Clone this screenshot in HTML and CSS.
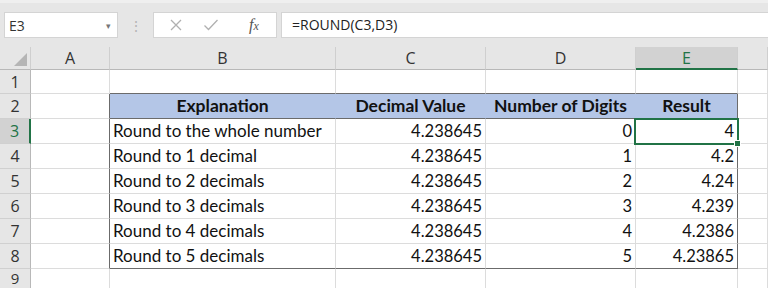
FILE: index.html
```html
<!DOCTYPE html>
<html lang="en">
<head>
    <meta charset="UTF-8">
    <title>ROUND example</title>
    <link rel="stylesheet" href="styles.css">
</head>
<body>

<div class="toolbar">
    <div class="name-box">
        <span>E3</span>
        <span class="caret">&#9662;</span>
    </div>
    <div class="grip">&#8942;</div>
    <div class="fx-box">
        <svg width="14" height="14" viewBox="0 0 14 14" class="ico">
            <path d="M2 2 L12 12 M12 2 L2 12" stroke="#b0b0b0" stroke-width="1.3" fill="none"/>
        </svg>
        <svg width="16" height="14" viewBox="0 0 16 14" class="ico">
            <path d="M1.5 7.5 L5.5 11.5 L14.5 2" stroke="#b0b0b0" stroke-width="1.3" fill="none"/>
        </svg>
        <span class="fx">f<i>x</i></span>
    </div>
    <div class="formula">=ROUND(C3,D3)</div>
</div>

<div class="sheet" id="sheet">
    <!-- cells are built below -->
</div>

<script>
    const rows = [
        ["Round to the whole number", "4.238645", "0", "4"],
        ["Round to 1 decimal", "4.238645", "1", "4.2"],
        ["Round to 2 decimals", "4.238645", "2", "4.24"],
        ["Round to 3 decimals", "4.238645", "3", "4.239"],
        ["Round to 4 decimals", "4.238645", "4", "4.2386"],
        ["Round to 5 decimals", "4.238645", "5", "4.23865"]
    ];
    const heads = ["Explanation", "Decimal Value", "Number of Digits", "Result"];
    const letters = ["A", "B", "C", "D", "E", ""];

    function cell(text, cls) {
        const div = document.createElement("div");
        div.className = "cell " + (cls || "");
        div.textContent = text;
        return div;
    }

    function renderSheet() {
        const sheet = document.getElementById("sheet");

        // column headers
        sheet.appendChild(cell("", "corner"));
        letters.forEach((l) => {
            sheet.appendChild(cell(l, "col-head" + (l === "E" ? " active" : "")));
        });

        for (let r = 1; r <= 9; r++) {
            sheet.appendChild(cell(r, "row-head" + (r === 3 ? " active" : "") + (r === 9 ? " last" : "")));

            for (let c = 0; c < 6; c++) {
                let cls = "";
                let text = "";
                const inTable = r >= 2 && r <= 8 && c >= 1 && c <= 4;

                if ((c === 0 || c === 4) && r >= 2 && r <= 8) cls += " edge-r";
                if (r === 1 && c >= 1 && c <= 4) cls += " edge-b";
                if ((r === 2 || r === 8) && inTable) cls += " edge-b";

                if (r === 2 && inTable) {
                    cls += " th";
                    text = heads[c - 1];
                } else if (inTable) {
                    text = rows[r - 3][c - 1];
                    cls += c === 1 ? " txt" : " num";
                    if (r === 3 && c === 4) cls += " selected";
                }
                sheet.appendChild(cell(text, cls));
            }
        }
    }

    renderSheet();
</script>

</body>
</html>
```

FILE: styles.css
```css
body {
    margin: 0;
    background: #fff;
    font-family: Lato, "Liberation Sans", sans-serif;
    overflow: hidden;
}
.toolbar {
    display: flex;
    align-items: center;
    height: 47px;
    padding: 0 0 0 4px;
    background: #e6e6e6;
    box-sizing: border-box;
    border-top: 3px solid #efefef;
}
.name-box {
    width: 114px;
    height: 26px;
    background: #fff;
    border: 1px solid #d4d4d4;
    box-sizing: border-box;
    display: flex;
    align-items: center;
    justify-content: space-between;
    padding: 0 6px 0 4px;
    font-family: "Open Sans", sans-serif;
    font-size: 14px;
    color: #333;
}
.caret {
    font-size: 9px;
    color: #777;
}
.grip {
    width: 35px;
    text-align: center;
    color: #b5b5b5;
    font-size: 14px;
}
.fx-box {
    width: 124px;
    height: 26px;
    background: #fff;
    border: 1px solid #d4d4d4;
    box-sizing: border-box;
    display: flex;
    align-items: center;
    gap: 20px;
    padding-left: 15px;
}
.fx {
    font-family: "Liberation Serif", serif;
    font-style: italic;
    font-size: 16px;
    color: #555;
    margin-left: 10px;
}
.fx i {
    font-size: 12px;
}
.formula {
    flex: 1;
    height: 26px;
    margin-left: 4px;
    background: #fff;
    border: 1px solid #d4d4d4;
    border-right: none;
    box-sizing: border-box;
    padding-left: 10px;
    line-height: 24px;
    font-family: "Open Sans", sans-serif;
    font-size: 14px;
    color: #222;
}
.sheet {
    display: grid;
    grid-template-columns: 31px 79px 226px 150px 150px 102px 1fr;
    grid-template-rows: 23px 24px repeat(7, 25px) 25px;
}
.cell {
    box-sizing: border-box;
    border-right: 1px solid #dcdcdc;
    border-bottom: 1px solid #dcdcdc;
    font-size: 17px;
    color: #111;
    line-height: 24px;
    white-space: nowrap;
}
.corner {
    background: #e6e6e6;
    border-right: 1px solid #cfcfcf;
    border-bottom: 1px solid #b8b8b8;
    position: relative;
}
.corner::after {
    content: "";
    position: absolute;
    right: 3px;
    bottom: 3px;
    border-left: 13px solid transparent;
    border-bottom: 13px solid #b5b5b5;
}
.col-head {
    background: #e6e6e6;
    border-right: 1px solid #cfcfcf;
    border-bottom: 1px solid #b8b8b8;
    text-align: center;
    font-family: "Open Sans", sans-serif;
    font-size: 16px;
    line-height: 22px;
    color: #333;
}
.col-head.active {
    background: #d2d2d2;
    border-bottom: 2px solid #217346;
    color: #217346;
}
.row-head {
    background: #e6e6e6;
    border-right: 1px solid #b8b8b8;
    border-bottom: 1px solid #d0d0d0;
    text-align: center;
    font-family: "Open Sans", sans-serif;
    font-size: 16px;
    color: #333;
}
.row-head.active {
    background: #d2d2d2;
    border-right: 2px solid #217346;
    color: #217346;
}
.row-head.last {
    font-size: 15px;
    line-height: 18px;
}
.edge-r {
    border-right-color: #6b6b6b;
}
.edge-b {
    border-bottom-color: #6b6b6b;
}
.th {
    background: #b4c6e7;
    text-align: center;
    font-weight: bold;
    font-size: 17.5px;
    border-right-color: #b4c6e7;
}
.th.edge-r {
    border-right-color: #6b6b6b;
}
.txt {
    padding-left: 3px;
}
.num {
    text-align: right;
    padding-right: 3px;
    font-size: 16.5px;
}
.selected {
    position: relative;
}
.selected::after {
    content: "";
    position: absolute;
    left: -2px;
    top: -1px;
    right: -2px;
    bottom: -2px;
    border: 2px solid #217346;
}
.selected::before {
    content: "";
    position: absolute;
    right: -4px;
    bottom: -4px;
    width: 5px;
    height: 5px;
    background: #217346;
    border: 1px solid #fff;
    z-index: 1;
}
```
